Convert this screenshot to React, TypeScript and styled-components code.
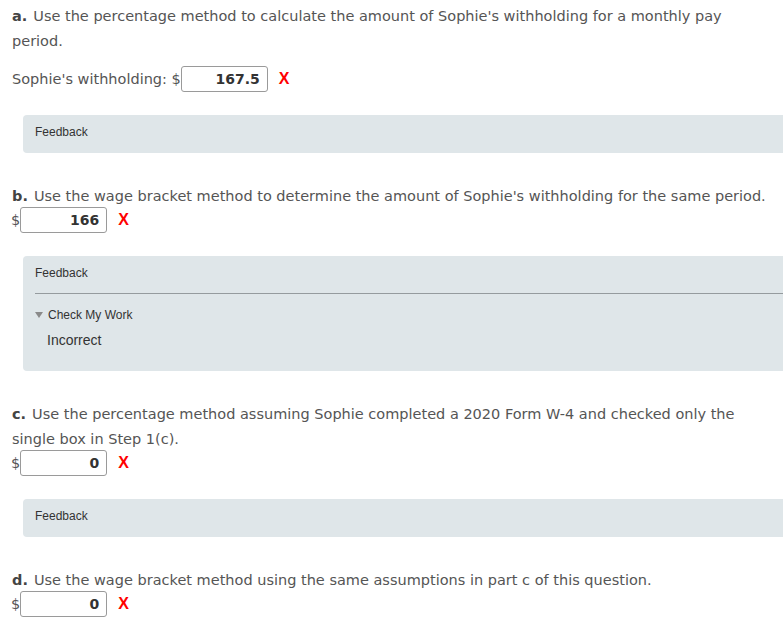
import React from "react";
import styled, { createGlobalStyle } from "styled-components";

const GlobalStyle = createGlobalStyle`
  html, body {
    margin: 0;
    padding: 0;
    background: #ffffff;
    overflow: hidden;
  }
`;

const Page = styled.div`
  padding: 2px 0 0 12px;
  font-family: "DejaVu Sans", Verdana, sans-serif;
  font-size: 14.5px;
  color: #555555;
`;

const Part = styled.section<{ $gap: number }>`
  margin-top: ${(p) => p.$gap}px;
`;

const Question = styled.p`
  margin: 0 0 -2px;
  padding-top: 2px;
  line-height: 25px;
  white-space: nowrap;
`;

const Letter = styled.b`
  color: #444444;
  margin-right: 6px;
`;

const AnswerRow = styled.div<{ $top?: number }>`
  display: flex;
  align-items: center;
  height: 26px;
  margin-top: ${(p) => p.$top || 0}px;
  margin-left: ${(p) => (p.$top ? 0 : -1)}px;
`;

const Label = styled.span`
  line-height: 26px;
`;

const AmountInput = styled.div`
  box-sizing: border-box;
  width: 87px;
  height: 26px;
  border: 1px solid #9a9a9a;
  border-radius: 3px;
  padding-right: 7px;
  display: flex;
  align-items: center;
  justify-content: flex-end;
  font-family: "DejaVu Sans", Verdana, sans-serif;
  font-weight: bold;
  font-size: 14px;
  color: #333333;
`;

const WrongMark = styled.span`
  margin-left: 11px;
  font-family: "Liberation Sans", Arial, sans-serif;
  font-weight: bold;
  font-size: 16px;
  color: #ff0000;
`;

const FeedbackBox = styled.div`
  margin: 23px -40px 0 11px;
  padding: 9px 12px 13px;
  background: #dfe6e9;
  border-radius: 4px;
  font-family: "Liberation Sans", Arial, sans-serif;
  color: #333333;
`;

const FeedbackTitle = styled.div`
  font-size: 12px;
  line-height: 16px;
`;

const Divider = styled.hr`
  margin: 12px 0 13px;
  border: none;
  border-top: 1px solid #959b9e;
`;

const CheckToggle = styled.div`
  display: flex;
  align-items: center;
  font-size: 12px;
  line-height: 16px;
`;

const Caret = styled.span`
  width: 0;
  height: 0;
  border-left: 4px solid transparent;
  border-right: 4px solid transparent;
  border-top: 6px solid #8a8a8a;
  margin: 0 5px 0 0;
`;

const Verdict = styled.div`
  margin: 8px 0 9px 12px;
  font-size: 14px;
  line-height: 18px;
`;

function Answer({ value, label, top }: { value: string; label: string; top?: number }) {
  return (
    <AnswerRow $top={top}>
      <Label>{label}</Label>
      <AmountInput>{value}</AmountInput>
      <WrongMark>X</WrongMark>
    </AnswerRow>
  );
}

export default function App() {
  return (
    <Page>
      <GlobalStyle />
      <Part $gap={0}>
        <Question>
          <Letter>a.</Letter>Use the percentage method to calculate the amount of Sophie's withholding for a monthly pay
          <br />
          period.
        </Question>
        <Answer label="Sophie's withholding: $" value="167.5" top={14} />
        <FeedbackBox>
          <FeedbackTitle>Feedback</FeedbackTitle>
        </FeedbackBox>
      </Part>

      <Part $gap={29}>
        <Question>
          <Letter>b.</Letter>Use the wage bracket method to determine the amount of Sophie's withholding for the same period.
        </Question>
        <Answer label="$" value="166" />
        <FeedbackBox>
          <FeedbackTitle>Feedback</FeedbackTitle>
          <Divider />
          <CheckToggle>
            <Caret />
            Check My Work
          </CheckToggle>
          <Verdict>Incorrect</Verdict>
        </FeedbackBox>
      </Part>

      <Part $gap={29}>
        <Question>
          <Letter>c.</Letter>Use the percentage method assuming Sophie completed a 2020 Form W-4 and checked only the
          <br />
          single box in Step 1(c).
        </Question>
        <Answer label="$" value="0" />
        <FeedbackBox>
          <FeedbackTitle>Feedback</FeedbackTitle>
        </FeedbackBox>
      </Part>

      <Part $gap={29}>
        <Question>
          <Letter>d.</Letter>Use the wage bracket method using the same assumptions in part c of this question.
        </Question>
        <Answer label="$" value="0" />
      </Part>
    </Page>
  );
}
